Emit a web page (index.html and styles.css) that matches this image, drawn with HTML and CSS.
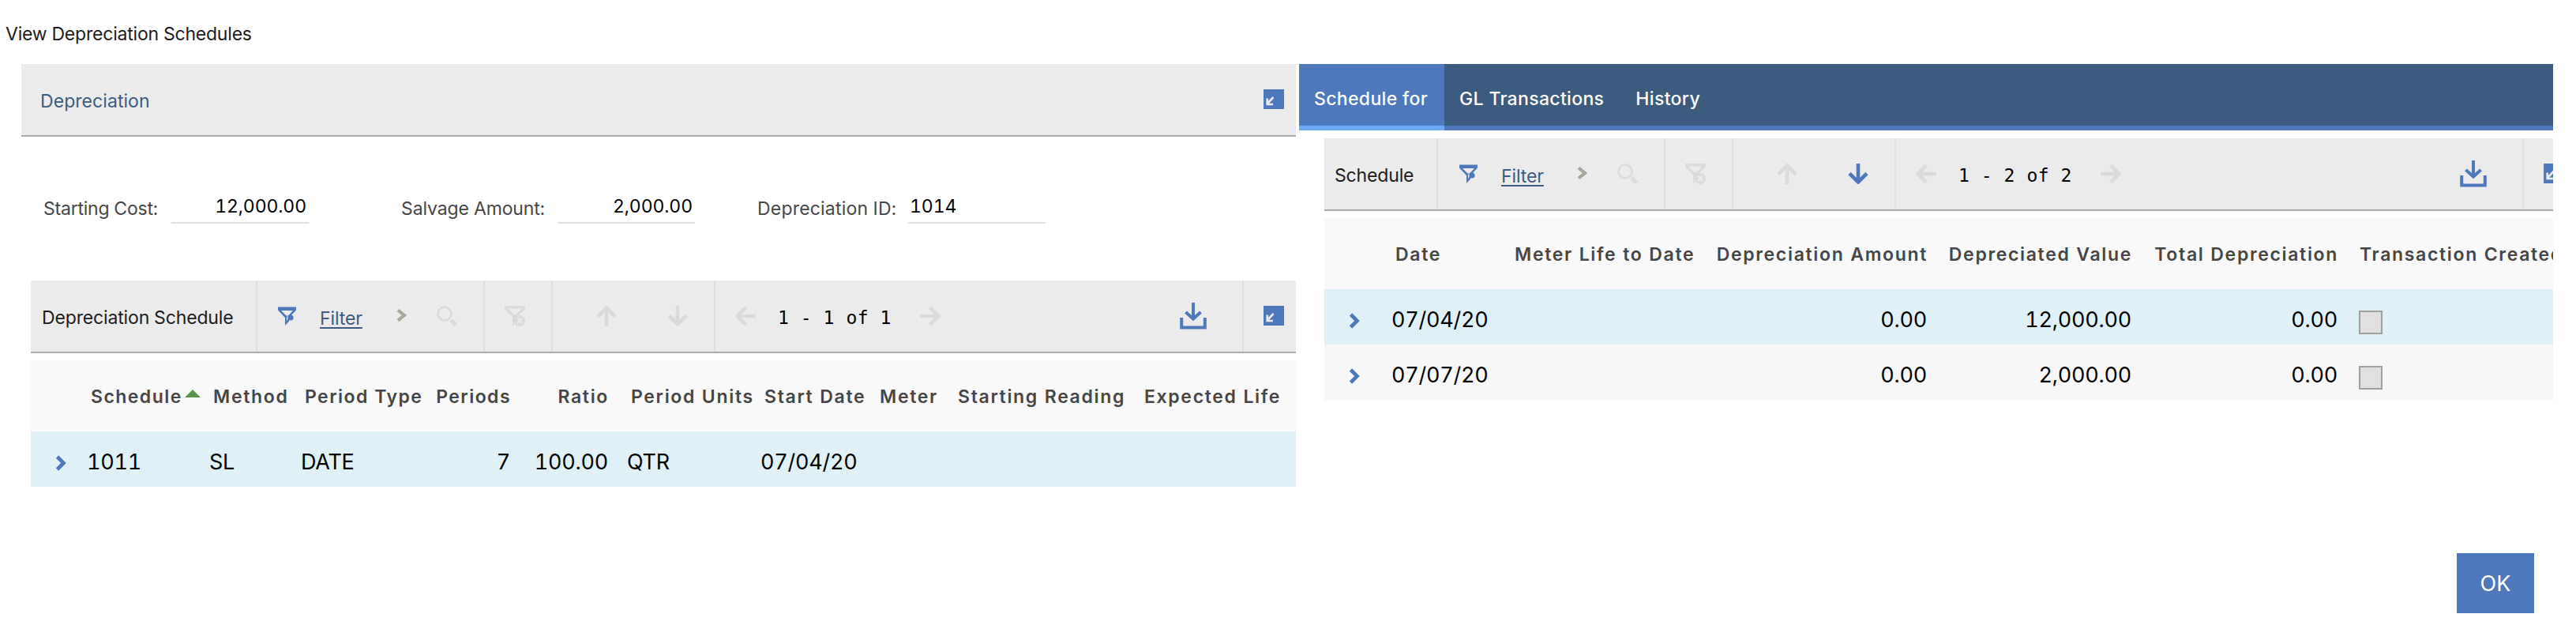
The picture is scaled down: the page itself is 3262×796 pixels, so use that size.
FILE: index.html
```
<!DOCTYPE html>
<html lang="en">
<head>
<meta charset="utf-8">
<title>View Depreciation Schedules</title>
<link rel="stylesheet" href="styles.css">
</head>
<body>
<svg class="sprite" aria-hidden="true">
  <symbol id="funnel" viewBox="0 0 23 24"><path d="M0 .5h23v4L14 14v4.500L9 24V14L0 4.500z" fill="currentColor"/><path d="M4 5h15l-6 6.500h-2.500z" fill="#ebebeb"/><path d="M11 12.500l2 0v2l-2 4z" fill="#ebebeb"/><circle cx="16" cy="14" r="3.600" fill="currentColor"/></symbol>
  <symbol id="chev" viewBox="0 0 13 16"><path d="M2 1.500 10 8l-8 6.500" fill="none" stroke="currentColor" stroke-width="4"/></symbol>
  <symbol id="expand" viewBox="0 0 14 20"><path d="M2.500 2 10.500 10l-8 8" fill="none" stroke="currentColor" stroke-width="4.600"/></symbol>
  <symbol id="search" viewBox="0 0 26 26"><circle cx="10" cy="10" r="8.500" fill="none" stroke="currentColor" stroke-width="2.600"/><path d="M18.200 18.200l6 6" stroke="currentColor" stroke-width="5.200"/></symbol>
  <symbol id="clear" viewBox="0 0 26 26"><path d="M0 0h26v4L16.500 13v5L10 26V14L0 4z" fill="currentColor"/><path d="M4.500 3.500h17L14.500 11h-3z" fill="#ebebeb"/><circle cx="19" cy="19" r="7" fill="currentColor"/><path d="M16 15.500l6 6.500m0-6.500l-6 6.500" stroke="#ebebeb" stroke-width="2"/></symbol>
  <symbol id="arrow" viewBox="0 0 26 26"><path d="M13 26V4M2 13.500 13 2.500l11 11" fill="none" stroke="currentColor" stroke-width="4.600"/></symbol>
  <symbol id="download" viewBox="0 0 34 34"><path d="M17 0v20M7.500 12 17 20.500 26.500 12M2.200 19v12.500h29.600V19" fill="none" stroke="currentColor" stroke-width="4"/></symbol>
  <symbol id="collapse" viewBox="0 0 26 25"><path d="M0 0h26v25H0z" fill="currentColor"/><path d="M12.500 10 5 18M4.700 11.500V19H12" fill="none" stroke="#ebebeb" stroke-width="2.600"/></symbol>
</svg>

<h1 class="title">View Depreciation Schedules</h1>
<main class="main">
  <section class="left">
    <div class="panel-head">
      <h2>Depreciation</h2>
      <svg class="i-collapse"><use href="#collapse"/></svg>
    </div>
    <div class="fields">
      <label class="f-cost">Starting Cost:</label><div class="value num">12,000.00</div>
      <label class="f-salvage">Salvage Amount:</label><div class="value num">2,000.00</div>
      <label class="f-id">Depreciation ID:</label><div class="value">1014</div>
    </div>
    <div class="inner">
      <div class="toolbar">
        <div class="group name wide">Depreciation Schedule</div>
        <div class="group find">
          <svg class="i-funnel"><use href="#funnel"/></svg><a class="filter">Filter</a><svg class="i-chev"><use href="#chev"/></svg><svg class="i-search off"><use href="#search"/></svg>
        </div>
        <div class="group wipe"><svg class="icon off"><use href="#clear"/></svg></div>
        <div class="group move"><svg class="icon off"><use href="#arrow"/></svg><svg class="icon off down"><use href="#arrow"/></svg></div>
        <div class="group pages"><svg class="icon off prev"><use href="#arrow"/></svg><span class="count">1 - 1 of 1</span><svg class="icon off next"><use href="#arrow"/></svg></div>
        <div class="group save"><svg class="i-download"><use href="#download"/></svg></div>
        <svg class="i-collapse"><use href="#collapse"/></svg>
      </div>
      <div class="table schedules">
        <div class="row header">
          <span></span><span class="tight">Schedule<i class="sort"></i></span><span>Method</span><span class="tight">Period Type</span><span class="num tight">Periods</span><span class="num">Ratio</span><span></span><span>Period Units</span><span>Start Date</span><span>Meter</span><span>Starting Reading</span><span>Expected Life</span>
        </div>
        <div class="row current">
          <svg class="expand"><use href="#expand"/></svg><span>1011</span><span>SL</span><span>DATE</span><span class="num">7</span><span class="num">100.00</span><span></span><span>QTR</span><span>07/04/20</span>
        </div>
      </div>
    </div>
  </section>

  <section class="right">
    <nav class="tabs"><a class="tab active">Schedule for</a><a class="tab">GL Transactions</a><a class="tab">History</a></nav>
    <div class="detail">
      <div class="toolbar">
        <div class="group name">Schedule</div>
        <div class="group find">
          <svg class="i-funnel"><use href="#funnel"/></svg><a class="filter">Filter</a><svg class="i-chev"><use href="#chev"/></svg><svg class="i-search off"><use href="#search"/></svg>
        </div>
        <div class="group wipe"><svg class="icon off"><use href="#clear"/></svg></div>
        <div class="group move"><svg class="icon off"><use href="#arrow"/></svg><svg class="icon down"><use href="#arrow"/></svg></div>
        <div class="group pages"><svg class="icon off prev"><use href="#arrow"/></svg><span class="count">1 - 2 of 2</span><svg class="icon off next"><use href="#arrow"/></svg></div>
        <div class="group save"><svg class="i-download"><use href="#download"/></svg></div>
        <svg class="i-collapse"><use href="#collapse"/></svg>
      </div>
      <div class="table periods">
        <div class="row header">
          <span></span><span>Date</span><span>Meter Life to Date</span><span class="num">Depreciation Amount</span><span class="num">Depreciated Value</span><span class="num">Total Depreciation</span><span></span><span>Transaction Created</span>
        </div>
        <div class="row current">
          <svg class="expand"><use href="#expand"/></svg><span>07/04/20</span><span></span><span class="num">0.00</span><span class="num">12,000.00</span><span class="num">0.00</span><span></span><span class="check"></span>
        </div>
        <div class="row">
          <svg class="expand"><use href="#expand"/></svg><span>07/07/20</span><span></span><span class="num">0.00</span><span class="num">2,000.00</span><span class="num">0.00</span><span></span><span class="check"></span>
        </div>
      </div>
    </div>
  </section>
</main>
<footer class="footer"><button class="ok">OK</button></footer>
</body>
</html>
```
FILE: styles.css
```
* { box-sizing: border-box; }
body {
  margin: 0;
  background: #fff;
  color: #1c1c1c;
  font: 23px/30px Inter, "Liberation Sans", sans-serif;
  font-variant-numeric: tabular-nums;
  white-space: nowrap;
  overflow: hidden;
}
svg { display: block; flex: none; color: #4d78bb; }
.sprite { width: 0; height: 0; position: absolute; }
h1, h2 { margin: 0; font: inherit; }
.title { height: 81px; padding: 28px 0 0 7px; letter-spacing: -.2px; }
.main { display: flex; height: 619px; }
.left { width: 1614px; margin-left: 27px; flex: none; }
.right { width: 1588px; margin-left: 4px; flex: none; overflow: hidden; }

.panel-head {
  display: flex;
  align-items: center;
  justify-content: space-between;
  height: 92px;
  padding: 0 15px 0 24px;
  background: #ebebeb;
  border-bottom: 2px solid #acacac;
}
.panel-head h2 { padding-top: 3px; color: #3c5b80; font: inherit; letter-spacing: .06px; }
.panel-head .i-collapse { margin-bottom: 1px; }

.fields { display: flex; height: 182px; padding: 72px 0 0 28px; color: #464646; }
.fields label { padding-top: 4px; }
.f-cost { width: 162px; letter-spacing: -.22px; }
.f-salvage { width: 198px; margin-left: 117px; letter-spacing: -.11px; }
.f-id { width: 191px; margin-left: 79px; letter-spacing: .19px; }
.value {
  width: 174px;
  height: 38px;
  padding: 1px 3px 0 2px;
  border-bottom: 2px solid #e0e0e0;
  color: #000;
  letter-spacing: -.1px;
}
.num { text-align: right; }
.inner { margin-left: 12px; }

.toolbar {
  display: flex;
  align-items: stretch;
  height: 92px;
  background: #ebebeb;
  border-bottom: 2px solid #acacac;
}
.group { display: flex; align-items: center; border-right: 2px solid #dfdfdf; flex: none; }
.name { width: 144px; padding: 3px 0 0 13px; letter-spacing: -.15px; }
.name.wide { width: 287px; padding-left: 14px; }
.find { width: 288px; padding-left: 27px; }
.i-funnel { width: 23px; height: 24px; }
.wide + .find .i-funnel { margin-left: -1px; }
.filter {
  width: 56px;
  margin: 5px 0 0 30px;
  color: #3c5b80;
  letter-spacing: -.1px;
  text-decoration: underline;
  text-decoration-thickness: 2px;
  text-underline-offset: 3px;
  text-decoration-skip-ink: none;
}
.i-chev { width: 13px; height: 16px; margin: 0 38px 2px 40px; color: #a8a79c; }
.wide + .find .i-chev { margin-left: 41px; }
.i-search, .icon { width: 26px; height: 26px; }
.toolbar .off { color: #dadada; }
.wipe { width: 86px; padding-left: 25px; }
.move { width: 206px; padding-left: 55px; }
.move .down { margin-left: 64px; transform: rotate(180deg); }
.pages { padding-left: 25px; border: 0; }
.prev { transform: rotate(-90deg); }
.next { transform: rotate(90deg); }
.count {
  width: 144px;
  margin: 4px 36px 0 28px;
  color: #000;
  font: 23px/30px "DejaVu Sans Mono", monospace;
  letter-spacing: .55px;
}
.save { margin-left: auto; padding-right: 45px; }
.i-download { width: 34px; height: 34px; }
.i-collapse { width: 26px; height: 25px; }
.toolbar .i-collapse { align-self: center; margin: 0 15px 1px 25px; }

.table { margin-top: 9px; }
.row {
  display: grid;
  align-items: center;
  height: 70px;
  padding-top: 7px;
  background: #f7f7f7;
  color: #000;
  font-size: 27px;
  letter-spacing: -.25px;
}
.schedules .row { grid-template-columns: 71px 155px 116px 166px 100px 124px 23px 169px 146px 99px 236px 197px; }
.periods .row { grid-template-columns: 85px 151px 255px 273px 259px 261px 22px 279px; }
.row .num { padding-right: 1px; }
.row.current { background: #dff0f7; }
.row.header {
  height: 90px;
  padding-top: 2px;
  background: #f9f9f9;
  color: #464646;
  font-size: 23px;
  font-weight: 600;
  letter-spacing: 1.67px;
}
.header span { padding-left: 5px; }
.header .num { padding-right: 0; }
.header .tight { letter-spacing: 1.45px; }
.sort {
  display: inline-block;
  margin: 0 0 7px 3px;
  border: solid transparent;
  border-width: 0 10px 10px;
  border-bottom-color: #5d9548;
}
.expand { width: 14px; height: 20px; margin: 3px 0 0 31px; }
.check { width: 30px; height: 30px; margin: 7px 0 0 4px; background: #e0e0e0; border: 2px solid #a0a0a0; }

.tabs { display: flex; height: 84px; background: #3b5c7e; color: #fff; font-weight: 500; letter-spacing: .34px; }
.tab { padding: 29px 21px 0 19px; border-bottom: 6px solid #4d78bb; }
.tab:last-child { flex: 1; }
.tab.active { width: 184px; background: #4d78bb; border-color: #6ba8f5; }
.detail { width: 1585px; margin: 10px 0 0 32px; }

.footer { display: flex; justify-content: flex-end; padding-right: 53px; }
.ok {
  width: 98px;
  height: 76px;
  border: 0;
  padding: 2px 0 0;
  background: #4d78bb;
  color: #fff;
  font: 27px/74px Inter, "Liberation Sans", sans-serif;
}
```
